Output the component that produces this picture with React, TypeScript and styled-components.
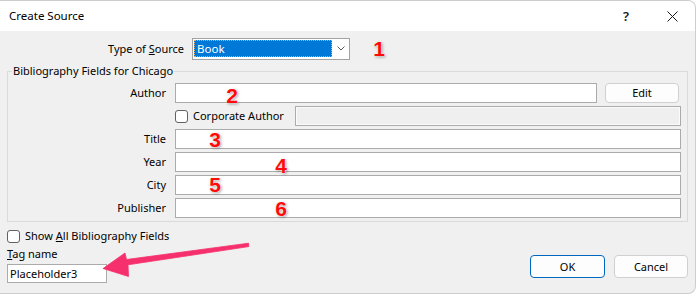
import React from "react";
import styled, { createGlobalStyle } from "styled-components";

const GlobalStyle = createGlobalStyle`
  html, body { margin: 0; padding: 0; background: #ffffff; }
  body { font-family: "Noto Sans", "Open Sans", sans-serif; font-size: 11px; color: #000; }
  * { box-sizing: border-box; }
`;

const Window = styled.div`
  position: relative;
  width: 696px;
  height: 294px;
  border: 1px solid #cdcdcd;
  border-left: none;
  border-radius: 0 8px 8px 0;
  overflow: hidden;
  display: flex;
  flex-direction: column;
  background: #f0f0f0;
`;

const TitleBar = styled.div`
  height: 30px;
  flex: none;
  background: #ffffff;
  display: flex;
  align-items: center;
  padding-left: 9px;
`;

const TitleText = styled.div`
  flex: 1;
  font-size: 11.5px;
  line-height: 16px;
`;

const CaptionButton = styled.div`
  width: 46px;
  height: 30px;
  display: flex;
  align-items: center;
  justify-content: center;
  font-size: 13px;
  font-weight: 600;
  color: #1a1a1a;
`;

const Body = styled.div`
  flex: 1;
  display: flex;
  flex-direction: column;
  padding: 0 7px;
`;

const TypeRow = styled.div`
  display: flex;
  align-items: center;
  margin-top: 7px;
  height: 22px;
`;

const TypeLabel = styled.div`
  width: 177px;
  text-align: right;
  margin-right: 8px;
  line-height: 16px;
`;

const Select = styled.div`
  width: 158px;
  height: 22px;
  border: 1px solid #a3a3a3;
  background: #fff;
  display: flex;
  align-items: stretch;
  padding: 1px 0 2px 1px;
`;

const SelectValue = styled.div`
  flex: 1;
  background: #0078d7;
  color: #fff;
  border: 1px dotted #e8a860;
  padding-left: 2px;
  line-height: 15px;
  font-size: 11.5px;
`;

const SelectArrow = styled.div`
  width: 17px;
  display: flex;
  align-items: center;
  justify-content: center;
`;

const Group = styled.fieldset`
  margin: 3px 0 0 0;
  border: 1px solid #dadada;
  padding: 4px 6px 3px 0;
  min-width: 0;
`;

const Legend = styled.legend`
  margin-left: 4px;
  padding: 0 1px;
  line-height: 16px;
`;

const FieldGrid = styled.div`
  display: grid;
  grid-template-columns: 158px 1fr;
  column-gap: 9px;
  row-gap: 3px;
  grid-auto-rows: 20px;
  align-items: center;
`;

const FieldLabel = styled.div`
  text-align: right;
  line-height: 16px;
`;

const TextBox = styled.div<{ $disabled?: boolean }>`
  height: 20px;
  flex: 1;
  border: 1px solid #ababab;
  background: ${(p) => (p.$disabled ? "#efefef" : "#ffffff")};
  box-shadow: ${(p) => (p.$disabled ? "inset 0 0 0 1px #fbfbfb" : "none")};
`;

const Cell = styled.div`
  display: flex;
  align-items: center;
  height: 20px;
`;

const EditButton = styled.div`
  width: 74px;
  height: 20px;
  margin: 0 2px 0 8px;
  border: 1px solid #d0d0d0;
  border-radius: 4px;
  background: #fdfdfd;
  display: flex;
  align-items: center;
  justify-content: center;
  line-height: 16px;
`;

const CheckRow = styled.div<{ $width?: number }>`
  display: flex;
  align-items: center;
  gap: 5px;
  height: 16px;
  width: ${(p) => (p.$width ? `${p.$width}px` : "auto")};
  flex: none;
`;

const CheckBox = styled.div`
  width: 13px;
  height: 13px;
  border: 1px solid #626262;
  border-radius: 3px;
  background: #fff;
  flex: none;
`;

const CheckText = styled.span`
  line-height: 16px;
`;

const Footer = styled.div`
  flex: 1;
  display: flex;
  justify-content: space-between;
  align-items: flex-end;
  padding-bottom: 11px;
`;

const FooterLeft = styled.div`
  display: flex;
  flex-direction: column;
  padding-top: 6px;
`;

const TagLabel = styled.div`
  margin-top: 2px;
  line-height: 16px;
`;

const TagInput = styled.div`
  margin-top: 2px;
  width: 100px;
  height: 19px;
  border: 1px solid #ababab;
  background: #fff;
  padding-left: 2px;
  line-height: 17px;
`;

const Buttons = styled.div`
  display: flex;
  gap: 9px;
  margin-bottom: 5px;
`;

const DialogButton = styled.div<{ $primary?: boolean; $width: number }>`
  width: ${(p) => p.$width}px;
  height: 23px;
  border: 1px solid ${(p) => (p.$primary ? "#0067c0" : "#d0d0d0")};
  border-radius: 4px;
  background: #fdfdfd;
  display: flex;
  align-items: center;
  justify-content: center;
  line-height: 16px;
`;

const Marker = styled.span<{ $x: number; $y: number }>`
  position: absolute;
  left: ${(p) => p.$x}px;
  top: ${(p) => p.$y}px;
  transform: translate(-50%, -50%);
  font-family: "Liberation Sans", Arial, sans-serif;
  font-size: 21px;
  font-weight: 700;
  line-height: 1;
  color: #ff0a0a;
  text-shadow: 0 0 1px #fff, 0 0 2px #fff, 1px 1px 3px rgba(0, 0, 0, 0.45);
  pointer-events: none;
`;

const Overlay = styled.svg`
  position: absolute;
  left: 0;
  top: 0;
  pointer-events: none;
`;

const markers = [
  { n: "1", x: 379, y: 47 },
  { n: "2", x: 232, y: 94 },
  { n: "3", x: 215, y: 138 },
  { n: "4", x: 281, y: 164 },
  { n: "5", x: 215, y: 183 },
  { n: "6", x: 281, y: 207 },
];

export default function App() {
  return (
    <>
      <GlobalStyle />
      <Window>
        <TitleBar>
          <TitleText>Create Source</TitleText>
          <CaptionButton>?</CaptionButton>
          <CaptionButton>
            <svg width="11" height="11" viewBox="0 0 11 11">
              <path d="M0.5 0.5 L10.5 10.5 M10.5 0.5 L0.5 10.5" stroke="#1a1a1a" strokeWidth="1" />
            </svg>
          </CaptionButton>
        </TitleBar>
        <Body>
          <TypeRow>
            <TypeLabel>
              Type of <u>S</u>ource
            </TypeLabel>
            <Select>
              <SelectValue>Book</SelectValue>
              <SelectArrow>
                <svg width="8" height="5" viewBox="0 0 8 5">
                  <path d="M0.5 0.5 L4 4 L7.5 0.5" fill="none" stroke="#5a5a5a" strokeWidth="1" />
                </svg>
              </SelectArrow>
            </Select>
          </TypeRow>
          <Group>
            <Legend>Bibliography Fields for Chicago</Legend>
            <FieldGrid>
              <FieldLabel>Author</FieldLabel>
              <Cell>
                <TextBox />
                <EditButton>Edit</EditButton>
              </Cell>
              <div />
              <Cell>
                <CheckRow $width={120}>
                  <CheckBox />
                  <CheckText>Corporate Author</CheckText>
                </CheckRow>
                <TextBox $disabled />
              </Cell>
              <FieldLabel>Title</FieldLabel>
              <TextBox />
              <FieldLabel>Year</FieldLabel>
              <TextBox />
              <FieldLabel>City</FieldLabel>
              <TextBox />
              <FieldLabel>Publisher</FieldLabel>
              <TextBox />
            </FieldGrid>
          </Group>
          <Footer>
            <FooterLeft>
              <CheckRow>
                <CheckBox />
                <CheckText>
                  Show <u>A</u>ll Bibliography Fields
                </CheckText>
              </CheckRow>
              <TagLabel>
                <u>T</u>ag name
              </TagLabel>
              <TagInput>Placeholder3</TagInput>
            </FooterLeft>
            <Buttons>
              <DialogButton $primary $width={75}>
                OK
              </DialogButton>
              <DialogButton $width={74}>Cancel</DialogButton>
            </Buttons>
          </Footer>
        </Body>
        {markers.map((m) => (
          <Marker key={m.n} $x={m.x} $y={m.y}>
            {m.n}
          </Marker>
        ))}
        <Overlay width="696" height="294" viewBox="0 0 696 294">
          <path
            d="M248.5 242.2 L248.8 245.6 L128 263.8 L128.5 275.5 L103 267.5 L125 252 L126.5 258.5 Z"
            fill="#f5306c"
            stroke="#f5306c"
            strokeWidth="0.8"
            strokeLinejoin="round"
          />
        </Overlay>
      </Window>
    </>
  );
}
